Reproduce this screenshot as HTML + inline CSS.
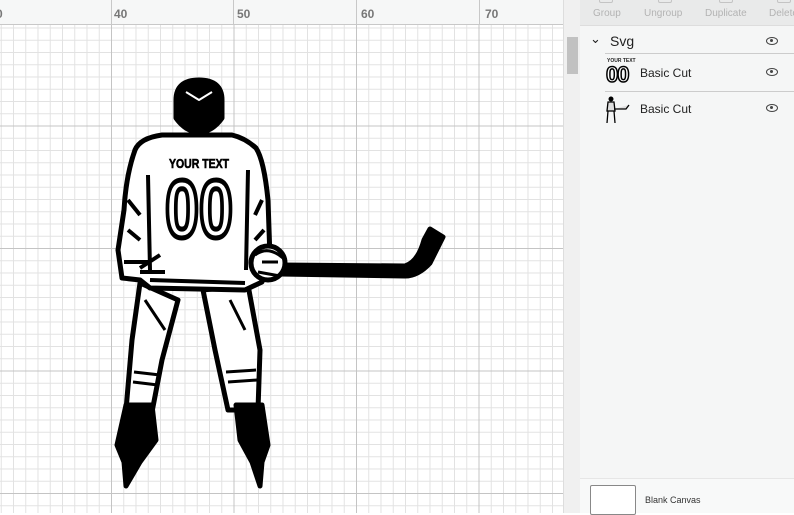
<!DOCTYPE html>
<html><head><meta charset="utf-8"><style>
*{margin:0;padding:0;box-sizing:border-box}
body{width:794px;height:513px;overflow:hidden;background:#fff;font-family:"Liberation Sans",sans-serif;position:relative}
#canvas{position:absolute;left:0;top:0;width:563px;height:513px;
background-color:#fff;
background-image:
linear-gradient(to right,#c4c4c4 1px,transparent 1px),
linear-gradient(to bottom,#c4c4c4 1px,transparent 1px),
linear-gradient(to right,#e2e2e2 1px,transparent 1px),
linear-gradient(to bottom,#e2e2e2 1px,transparent 1px);
background-size:122.5px 122.5px,122.5px 122.5px,12.25px 12.25px,12.25px 12.25px;
background-position:111px 3px,0 3px,111px 3px,0 3px;}
#ruler{position:absolute;left:0;top:0;width:563px;height:25px;background:#f6f7f7;border-bottom:1px solid #c8c8c8}
#ruler span{position:absolute;top:7px;font-size:12px;font-weight:bold;color:#777}
#ruler i{position:absolute;top:0;width:1px;height:25px;background:#c8c8c8}
#scroll{position:absolute;left:563px;top:0;width:17px;height:513px;background:#f0f0f0;border-left:1px solid #ddd}
#thumb{position:absolute;left:567px;top:37px;width:11px;height:37px;background:#c1c1c1}
#panel{position:absolute;left:580px;top:0;width:214px;height:513px;background:#f5f6f6}
#tb{position:absolute;left:0;top:0;width:214px;height:26px;background:#e9eaea;border-bottom:1px solid #ddd}
#tb span{position:absolute;top:8px;font-size:10px;color:#b3b3b3}
#tb em{position:absolute;top:-4px;width:14px;height:7px;border:1.5px solid #c4c4c4;border-radius:2px}
.row{position:absolute;left:0;width:214px;font-size:12px;color:#222}
.eye{position:absolute;left:186px;width:12px;height:8px;border:1.6px solid #444;border-radius:50%}
.eye:after{content:"";position:absolute;left:2.5px;top:1px;width:3px;height:3px;background:#444;border-radius:50%}
</style></head><body>
<div id="canvas"></div>
<div id="ruler">
<span style="left:-4px">0</span><span style="left:114px">40</span><span style="left:237px">50</span><span style="left:361px">60</span><span style="left:485px">70</span>
<i style="left:111px"></i><i style="left:233px"></i><i style="left:356px"></i><i style="left:479px"></i>
</div>
<svg style="position:absolute;left:0;top:0" width="563" height="513">
<g fill="#fff" stroke="#000" stroke-width="5" stroke-linejoin="round">
<path d="M280 265 L405 266 Q418 262 424 240 L430 229 L443 237 L430 263 Q418 276 405 276 L280 274 Z" fill="#000"/>
<path d="M140 283 L132 340 L126 410 L152 412 L162 360 L178 300 Z"/>
<path d="M203 290 L215 350 L228 410 L258 410 L260 350 L248 285 Z"/>
<path d="M134 372 L160 375 M133 382 L158 385 M226 372 L256 370 M228 382 L257 380 M145 300 L165 330 M230 300 L245 330" fill="none" stroke-width="3"/>
<path d="M126 405 L152 405 L156 440 L140 462 L126 486 L124 462 L117 445 Z" fill="#000"/>
<path d="M236 405 L262 405 L268 445 L262 462 L260 486 L252 462 L240 440 Z" fill="#000"/>
<path d="M162 135 Q140 138 135 150 Q126 175 124 210 L118 250 L122 278 L140 280 L150 288 L245 290 L262 282 L270 258 L268 200 Q264 160 256 148 Q245 138 232 135 Z"/>
<path d="M148 175 L150 270 M248 170 L246 270 M124 262 L150 262 M150 280 L245 283 M128 200 L140 215 M128 230 L140 240 M262 200 L255 215 M264 230 L255 240 M140 268 L160 255 M140 272 L165 272" fill="none" stroke-width="4"/>
<circle cx="268" cy="263" r="17" fill="#fff"/>
<path d="M255 255 Q268 245 283 258 M258 272 L280 276 M262 262 L278 262" fill="none" stroke-width="3"/>
<path d="M176 100 Q176 80 199 80 Q222 80 222 100 L222 118 Q212 132 199 132 Q186 132 176 118 Z" fill="#000"/>
<path d="M186 92 L199 100 L212 92" fill="none" stroke="#fff" stroke-width="2"/>
</g>
<text x="169" y="168" font-family="Liberation Sans" font-weight="bold" font-size="13" textLength="60" lengthAdjust="spacingAndGlyphs" fill="#000" stroke="#000" stroke-width="0.6">YOUR TEXT</text>
<text x="165" y="237" font-family="Liberation Sans" font-weight="bold" font-size="82" textLength="68" lengthAdjust="spacingAndGlyphs" fill="#fff" stroke="#000" stroke-width="5">00</text>
</svg>
<div id="scroll"></div><div id="thumb"></div>
<div id="panel">
<div id="tb"><em style="left:19px"></em><em style="left:78px"></em><em style="left:139px"></em><em style="left:197px"></em>
<span style="left:13px">Group</span><span style="left:64px">Ungroup</span><span style="left:125px">Duplicate</span><span style="left:189px">Delete</span></div>
<div class="row" style="top:31px;height:20px"><span style="position:absolute;left:10px;top:0;font-size:13px">&#8964;</span><span style="position:absolute;left:30px;top:2px;font-size:14px">Svg</span><div class="eye" style="top:6px"></div></div>
<div style="position:absolute;left:25px;top:53px;width:189px;height:1px;background:#ccc"></div>
<div class="row" style="top:56px;height:34px">
<span style="position:absolute;left:27px;top:2px;font-size:5px;font-weight:bold">YOUR TEXT</span>
<span style="position:absolute;left:26px;top:6px;font-size:22px;font-weight:bold;color:#fff;-webkit-text-stroke:1.5px #000;letter-spacing:-1px">00</span>
<span style="position:absolute;left:60px;top:10px">Basic Cut</span><div class="eye" style="top:12px"></div></div>
<div style="position:absolute;left:25px;top:91px;width:189px;height:1px;background:#ccc"></div>
<div class="row" style="top:94px;height:32px">
<svg style="position:absolute;left:24px;top:2px" width="26" height="28"><circle cx="7" cy="3" r="2.5"/><path d="M4 6 L10 6 L11 15 L3 15 Z M4 15 L3 27 M10 15 L11 27 M10 13 L22 13 L25 9" stroke="#000" fill="#ddd" stroke-width="1.3"/></svg>
<span style="position:absolute;left:60px;top:8px">Basic Cut</span><div class="eye" style="top:10px"></div></div>
<div style="position:absolute;left:0;top:478px;width:214px;height:35px;background:#f8f9f9;border-top:1px solid #e6e6e6"></div>
<div style="position:absolute;left:10px;top:485px;width:46px;height:30px;background:#fff;border:1px solid #888;border-radius:2px"></div>
<span style="position:absolute;left:65px;top:495px;font-size:9px;color:#333">Blank Canvas</span>
</div>
</body></html>
